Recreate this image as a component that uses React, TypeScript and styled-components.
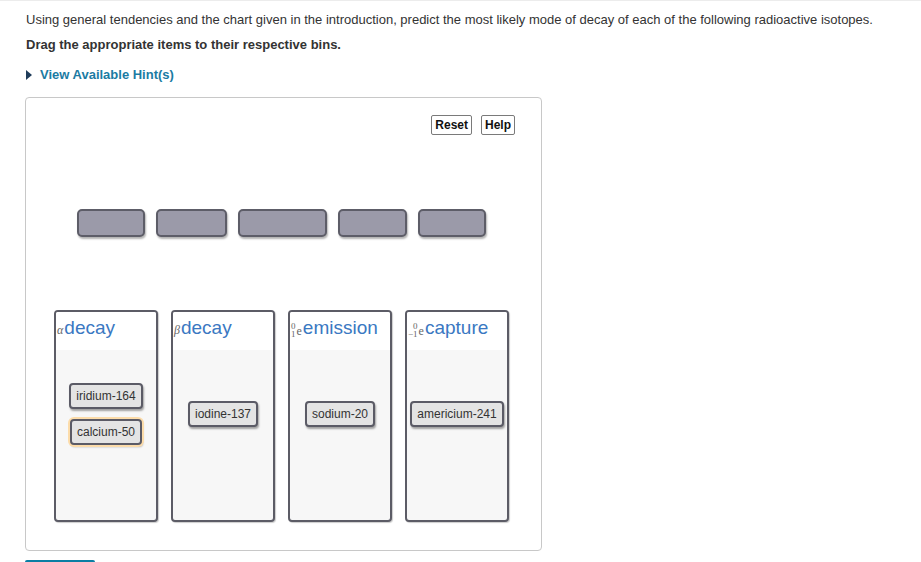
import React from 'react';
import styled, { createGlobalStyle } from 'styled-components';

const GlobalStyle = createGlobalStyle`
  html, body {
    margin: 0;
    padding: 0;
    background: #fff;
  }
  body {
    font-family: 'Liberation Sans', Arial, sans-serif;
    font-size: 13px;
    color: #333;
    border-top: 1px solid #ececec;
  }
`;

const Page = styled.div`
  padding: 11px 0 0 26px;
`;

const Prompt = styled.p<{ bold?: boolean }>`
  margin: 0 0 ${({ bold }) => (bold ? 14 : 9)}px;
  line-height: 16px;
  font-weight: ${({ bold }) => (bold ? 'bold' : 'normal')};
`;

const Hint = styled.div`
  display: flex;
  align-items: center;
  gap: 8px;
  font-weight: bold;
  color: #1b7ba3;
  line-height: 16px;
  margin-bottom: 14px;
`;

const Caret = styled.span`
  width: 0;
  height: 0;
  border-top: 5px solid transparent;
  border-bottom: 5px solid transparent;
  border-left: 6px solid #1f3c5a;
`;

const Board = styled.div`
  margin-left: -1px;
  width: 517px;
  height: 454px;
  box-sizing: border-box;
  border: 1px solid #c8c8c8;
  border-radius: 4px;
  padding: 17px 26px 0 29px;
  display: flex;
  flex-direction: column;
`;

const Tools = styled.div`
  display: flex;
  justify-content: flex-end;
  gap: 9px;
`;

const ToolButton = styled.button`
  font-family: 'Liberation Sans', Arial, sans-serif;
  font-size: 12px;
  font-weight: bold;
  color: #111;
  background: #fff;
  border: 1px solid #7a7a7a;
  border-radius: 2px;
  height: 20px;
  padding: 0 3px;
  line-height: 17px;
`;

const Blanks = styled.div`
  display: flex;
  gap: 11px;
  margin: 74px 0 0 22px;
`;

const Blank = styled.div<{ w: number }>`
  width: ${({ w }) => w}px;
  height: 28px;
  box-sizing: border-box;
  background: #9b9aa9;
  border: 2px solid #5d5d68;
  border-radius: 5px;
  box-shadow: 1px 2px 2px rgba(0, 0, 0, 0.3);
`;

const Bins = styled.div`
  display: flex;
  gap: 13px;
  margin-top: 73px;
  margin-left: -1px;
`;

const Bin = styled.div`
  width: 104px;
  height: 212px;
  box-sizing: border-box;
  border: 2px solid #5c5c66;
  border-radius: 4px;
  background: #f7f7f7;
  overflow: hidden;
  box-shadow: 1px 1px 1px rgba(0, 0, 0, 0.2);
`;

const BinHeader = styled.div`
  height: 38px;
  background: #fff;
  display: flex;
  align-items: flex-start;
  padding: 4px 0 0 1px;
  box-sizing: border-box;
  font-size: 19px;
  line-height: 24px;
  color: #3a78c2;
  white-space: nowrap;
`;

const Greek = styled.span`
  font-family: 'Liberation Serif', 'Times New Roman', serif;
  font-size: 12px;
  line-height: 12px;
  color: #666;
  font-style: italic;
  margin-top: 8px;
  margin-right: 1px;
`;

const Nuclide = styled.span`
  display: inline-flex;
  align-items: center;
  font-family: 'Liberation Serif', 'Times New Roman', serif;
  color: #666;
  line-height: 1;
  margin: 6px 1px 0 0;
`;

const Stack = styled.span`
  display: inline-flex;
  flex-direction: column;
  align-items: flex-end;
  font-size: 9px;
  line-height: 8px;
  margin-right: 1px;
`;

const Letter = styled.span`
  font-size: 12px;
  line-height: 12px;
  margin-top: 2px;
`;

const BinBody = styled.div`
  height: 128px;
  display: flex;
  flex-direction: column;
  align-items: center;
  justify-content: center;
  gap: 10px;
`;

const Chip = styled.div<{ active?: boolean }>`
  height: 26px;
  box-sizing: border-box;
  padding: 0 5px;
  display: flex;
  align-items: center;
  font-size: 12px;
  color: #333;
  background: #e4e4e4;
  border: 2px solid #5b5b66;
  border-radius: 4px;
  box-shadow: ${({ active }) =>
    active
      ? '0 0 0 2px #fcdcaa, 1px 2px 2px rgba(0, 0, 0, 0.3)'
      : '1px 2px 2px rgba(0, 0, 0, 0.35)'};
`;

const Footer = styled.div`
  margin: 9px 0 0 -1px;
  width: 70px;
  height: 4px;
  background: #0a7ea4;
  border-radius: 2px 2px 0 0;
`;

const bins = [
  { head: <Greek>α</Greek>, label: 'decay', items: ['iridium-164', 'calcium-50'] },
  { head: <Greek>β</Greek>, label: 'decay', items: ['iodine-137'] },
  {
    head: (
      <Nuclide>
        <Stack>
          <span>0</span>
          <span>1</span>
        </Stack>
        <Letter>e</Letter>
      </Nuclide>
    ),
    label: 'emission',
    items: ['sodium-20'],
  },
  {
    head: (
      <Nuclide>
        <Stack>
          <span>0</span>
          <span>−1</span>
        </Stack>
        <Letter>e</Letter>
      </Nuclide>
    ),
    label: 'capture',
    items: ['americium-241'],
  },
];

export default function App() {
  return (
    <>
      <GlobalStyle />
      <Page>
        <Prompt>
          Using general tendencies and the chart given in the introduction, predict the most likely mode of decay of
          each of the following radioactive isotopes.
        </Prompt>
        <Prompt bold>Drag the appropriate items to their respective bins.</Prompt>
        <Hint>
          <Caret />
          View Available Hint(s)
        </Hint>
        <Board>
          <Tools>
            <ToolButton>Reset</ToolButton>
            <ToolButton>Help</ToolButton>
          </Tools>
          <Blanks>
            {[68, 71, 89, 69, 68].map((w, i) => (
              <Blank key={i} w={w} />
            ))}
          </Blanks>
          <Bins>
            {bins.map((b, i) => (
              <Bin key={i}>
                <BinHeader>
                  {b.head}
                  {b.label}
                </BinHeader>
                <BinBody>
                  {b.items.map((it) => (
                    <Chip key={it} active={it === 'calcium-50'}>
                      {it}
                    </Chip>
                  ))}
                </BinBody>
              </Bin>
            ))}
          </Bins>
        </Board>
        <Footer />
      </Page>
    </>
  );
}
